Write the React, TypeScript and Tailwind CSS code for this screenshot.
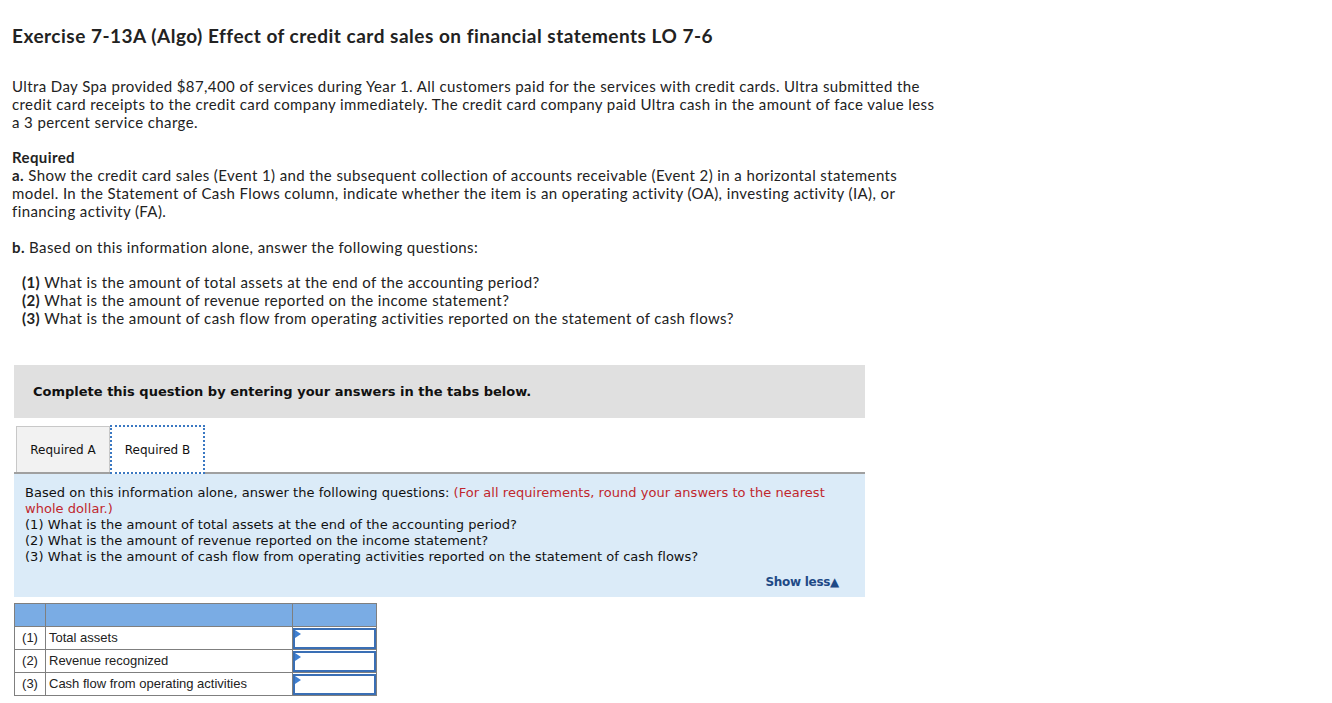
import React from "react";

const Tri = () => (
  <span className="absolute left-0 top-0 block h-0 w-0 border-y-[4px] border-l-[6px] border-y-transparent border-l-[#3f7fd0]" />
);

export default function App() {
  const rows = [
    ["(1)", "Total assets"],
    ["(2)", "Revenue recognized"],
    ["(3)", "Cash flow from operating activities"],
  ];
  return (
    <div className="min-h-[703px] w-[1332px] bg-white text-[#222]">
      <div className="px-[12px] pt-[24px]" style={{ fontFamily: "Lato, 'Open Sans', sans-serif" }}>
        <h1 className="text-[19px] font-bold leading-[24px] tracking-[0.5px] text-[#222]">
          Exercise 7-13A (Algo) Effect of credit card sales on financial statements LO 7-6
        </h1>
        <div className="whitespace-nowrap text-[15px] leading-[18px] tracking-[0.4px]">
          <p className="mt-[29px]">
            Ultra Day Spa provided $87,400 of services during Year 1. All customers paid for the services with credit cards. Ultra submitted the
            <br />
            credit card receipts to the credit card company immediately. The credit card company paid Ultra cash in the amount of face value less
            <br />
            a 3 percent service charge.
          </p>
          <p className="mt-[17px] font-bold">Required</p>
          <p>
            <b>a.</b> Show the credit card sales (Event 1) and the subsequent collection of accounts receivable (Event 2) in a horizontal statements
            <br />
            model. In the Statement of Cash Flows column, indicate whether the item is an operating activity (OA), investing activity (IA), or
            <br />
            financing activity (FA).
          </p>
          <p className="mt-[18px]">
            <b>b.</b> Based on this information alone, answer the following questions:
          </p>
          <div className="mt-[17px] pl-[10px]">
            <p><b>(1)</b> What is the amount of total assets at the end of the accounting period?</p>
            <p><b>(2)</b> What is the amount of revenue reported on the income statement?</p>
            <p><b>(3)</b> What is the amount of cash flow from operating activities reported on the statement of cash flows?</p>
          </div>
        </div>
      </div>

      <div className="ml-[14px] mt-[38px] w-[851px]" style={{ fontFamily: "'DejaVu Sans', Verdana, sans-serif" }}>
        <div className="flex h-[53px] items-center bg-[#e0e0e0] pl-[19px] text-[13px] font-bold text-[#111]">
          Complete this question by entering your answers in the tabs below.
        </div>
        <div className="mt-[7px] flex h-[49px] items-stretch border-b-2 border-[#a0a0a0]">
          <div className="ml-[2px] mt-[1px] flex w-[94px] items-center justify-center border border-b-0 border-[#c8c8c8] bg-[#f2f2f2] text-[12px] text-[#111]">
            Required A
          </div>
          <div className="-mb-[2px] flex w-[95px] items-center justify-center border-2 border-dotted border-[#3a78c2] bg-white text-[12px] text-[#111]">
            Required B
          </div>
        </div>
        <div className="bg-[#dbebf8] px-[11px] pb-[7px] pt-[11px] text-[13px] leading-[16px] tracking-[0.04px] text-[#111]">
          <p className="w-[820px]">
            Based on this information alone, answer the following questions:{" "}
            <span className="text-[#c0272d]">(For all requirements, round your answers to the nearest whole dollar.)</span>
          </p>
          <p>(1) What is the amount of total assets at the end of the accounting period?</p>
          <p>(2) What is the amount of revenue reported on the income statement?</p>
          <p>(3) What is the amount of cash flow from operating activities reported on the statement of cash flows?</p>
          <div className="mt-[9px] flex justify-end pr-[15px] text-[12px] font-bold tracking-[-0.3px] text-[#1f4a86]">
            Show less▲
          </div>
        </div>

        <table className="mt-[6px] border-collapse text-[13px] text-[#222]" style={{ fontFamily: "'Liberation Sans', Arial, sans-serif" }}>
          <tbody>
            <tr className="h-[23px] bg-[#7aace4]">
              <td className="w-[31px] border border-[#7f7f7f]" />
              <td className="w-[247px] border border-[#7f7f7f]" />
              <td className="w-[84px] border border-[#7f7f7f]" />
            </tr>
            {rows.map(([n, l]) => (
              <tr key={n} className="h-[23px]">
                <td className="border border-[#7f7f7f] px-[4px] text-center">{n}</td>
                <td className="border border-[#7f7f7f] px-[3px]">{l}</td>
                <td className="border border-[#7f7f7f] p-0">
                  <div className="relative h-[21px] border-2 border-[#3a6fb5] bg-white">
                    <Tri />
                  </div>
                </td>
              </tr>
            ))}
          </tbody>
        </table>
      </div>
    </div>
  );
}
